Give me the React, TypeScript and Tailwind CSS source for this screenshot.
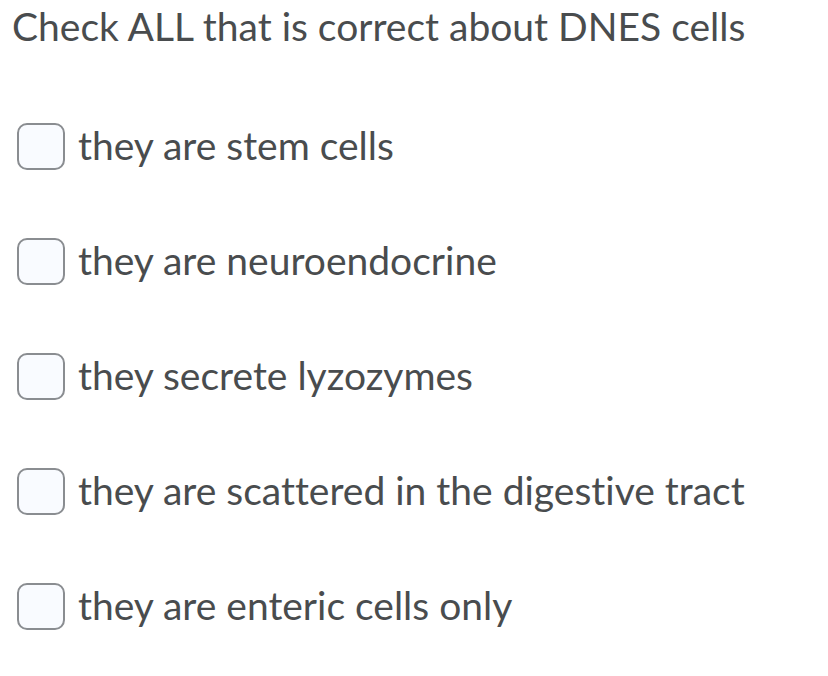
import React from "react";

const options = [
  "they are stem cells",
  "they are neuroendocrine",
  "they secrete lyzozymes",
  "they are scattered in the digestive tract",
  "they are enteric cells only",
];

export default function App() {
  return (
    <div
      className="w-[828px] h-[676px] bg-white text-[#494c4e] overflow-hidden [font-variant-ligatures:none]"
      style={{ fontFamily: "Lato, 'Open Sans', sans-serif" }}
    >
      <div className="pl-[12px] pt-[4px] text-[39px] leading-[44px]">
        Check ALL that is correct about DNES cells
      </div>
      <div className="flex flex-col gap-[68px] mt-[75px] pl-[17px]">
        {options.map((o) => (
          <div key={o} className="flex items-center h-[47px]">
            <div className="w-[48px] h-[47px] rounded-[10px] border-2 border-[#8a8d91] bg-[#f9fbff] shrink-0" />
            <span className="ml-[13px] text-[39px] leading-[47px] -translate-y-[1px]">{o}</span>
          </div>
        ))}
      </div>
    </div>
  );
}
